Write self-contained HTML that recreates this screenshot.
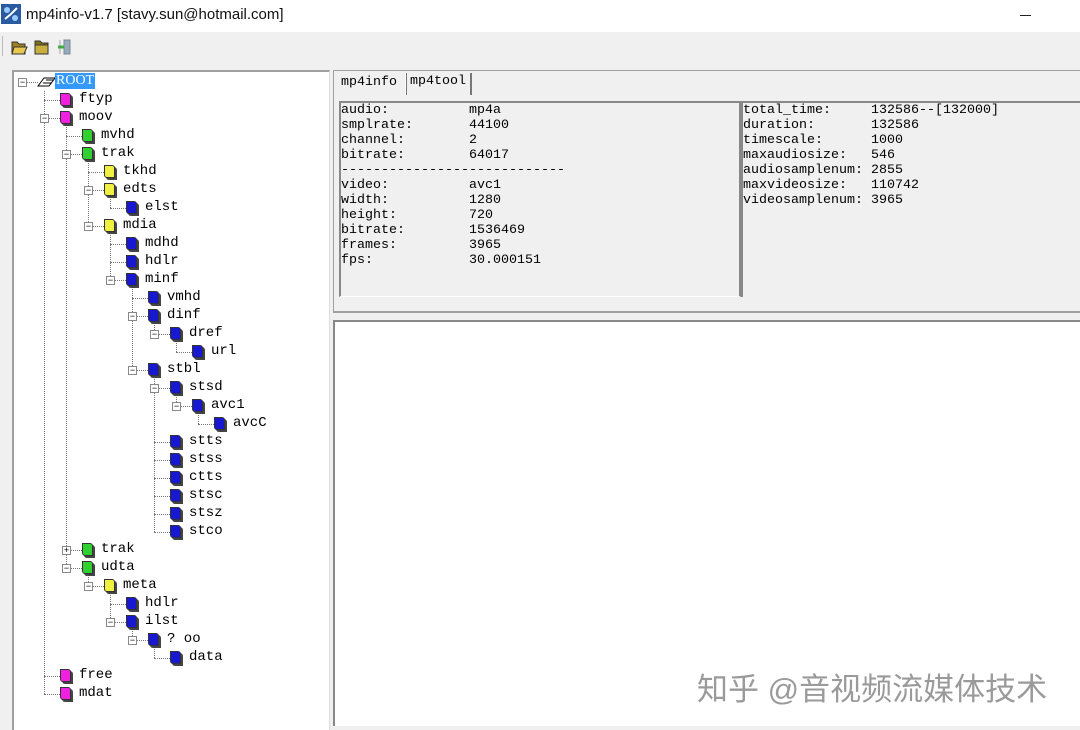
<!DOCTYPE html>
<html><head><meta charset="utf-8"><style>
*{margin:0;padding:0;box-sizing:border-box}
body{width:1080px;height:726px;background:#f0f0f0;position:relative;overflow:hidden;font-family:"Liberation Mono",monospace}
.abs{position:absolute}
#title{left:0;top:0;width:1080px;height:32px;background:#fff}
#title span{position:absolute;left:26px;top:6px;font:15px "Liberation Sans",sans-serif;color:#111}
#tree{left:12px;top:70px;width:318px;height:660px;background:#fff;border-top:2px solid #a0a0a0;border-left:2px solid #a0a0a0;border-right:1px solid #ddd}
.r{position:absolute;height:18px;width:200px}
.r .h{position:absolute;left:0;top:9px;width:16px;border-top:1px dotted #777}
.r .b{position:absolute;left:-4px;top:5px;width:9px;height:9px;border:1px solid #888;background:#fff;font:9px/7px "Liberation Sans";text-align:center;color:#000}
.r .i{position:absolute;left:16px;top:2px;width:11px;height:13px;border:1px solid #333;border-radius:0 3px 0 3px;box-shadow:2px 2px 0 #444}
.r .t{position:absolute;left:35px;top:0px;font-size:14px;color:#000;white-space:pre}
.m{background:#f020e0}.g{background:#30d030}.y{background:#f0f040}.bl{background:#1818d0}
.v{position:absolute;width:0;border-left:1px dotted #777}
.txt{font-size:13.33px;line-height:15px;white-space:pre;color:#000}
</style></head><body>
<div id="title" class="abs"><svg class="abs" style="left:1px;top:4px" width="20" height="20"><rect x="0" y="0" width="20" height="20" fill="#2a5aa0"/><circle cx="6" cy="6" r="3" fill="#9cf"/><circle cx="14" cy="14" r="3" fill="#9cf"/><path d="M4 15 L10 10 L16 4" stroke="#fff" stroke-width="2" fill="none"/></svg><span>mp4info-v1.7 [stavy.sun@hotmail.com]</span>
<div class="abs" style="left:1020px;top:15px;width:11px;border-top:1px solid #222"></div></div>
<div class="abs" style="left:2px;top:36px;width:1px;height:20px;background:#bbb"></div>
<svg class="abs" style="left:11px;top:38px" width="60" height="18"><path d="M1 4h5l2 2h6v10H1z" fill="#a08020" stroke="#333"/><path d="M3 9h13l-3 7H1z" fill="#e8c850" stroke="#333"/><path d="M24 3h5l2 2h6v11H24z" fill="#807018" stroke="#333"/><path d="M24 7h13v9H24z" fill="#c8b040" stroke="#333"/><rect x="48" y="2" width="2" height="14" fill="#ccc"/><rect x="53" y="2" width="6" height="14" fill="#9ab" stroke="#789"/><path d="M47 9h6" stroke="#4a4" stroke-width="3"/></svg>
<div id="tree" class="abs"></div>

<div class="v" style="left:44px;top:91px;height:603px"></div>
<div class="v" style="left:66px;top:127px;height:441px"></div>
<div class="v" style="left:88px;top:163px;height:63px"></div>
<div class="v" style="left:110px;top:199px;height:9px"></div>
<div class="v" style="left:110px;top:235px;height:45px"></div>
<div class="v" style="left:132px;top:289px;height:81px"></div>
<div class="v" style="left:154px;top:325px;height:9px"></div>
<div class="v" style="left:176px;top:343px;height:9px"></div>
<div class="v" style="left:154px;top:379px;height:153px"></div>
<div class="v" style="left:176px;top:397px;height:9px"></div>
<div class="v" style="left:198px;top:415px;height:9px"></div>
<div class="v" style="left:88px;top:577px;height:9px"></div>
<div class="v" style="left:110px;top:595px;height:27px"></div>
<div class="v" style="left:132px;top:631px;height:9px"></div>
<div class="v" style="left:154px;top:649px;height:9px"></div>

<div class="r" style="left:22px;top:73px"><div class="h"></div><div class="b">−</div><svg class="abs" style="left:14px;top:3px" width="20" height="12"><path d="M2 10 L8 2 H19 L13 10Z" fill="#fff" stroke="#000"/><path d="M7 7h8M10 4h7" stroke="#000"/></svg><div class="t" style="left:33px;top:0;background:#3399ff;color:#fff;padding:0 1px;font-family:'Liberation Serif',serif">ROOT</div></div>
<div class="r" style="left:44px;top:91px"><div class="h"></div><div class="i m"></div><div class="t">ftyp</div></div>
<div class="r" style="left:44px;top:109px"><div class="h"></div><div class="b">−</div><div class="i m"></div><div class="t">moov</div></div>
<div class="r" style="left:66px;top:127px"><div class="h"></div><div class="i g"></div><div class="t">mvhd</div></div>
<div class="r" style="left:66px;top:145px"><div class="h"></div><div class="b">−</div><div class="i g"></div><div class="t">trak</div></div>
<div class="r" style="left:88px;top:163px"><div class="h"></div><div class="i y"></div><div class="t">tkhd</div></div>
<div class="r" style="left:88px;top:181px"><div class="h"></div><div class="b">−</div><div class="i y"></div><div class="t">edts</div></div>
<div class="r" style="left:110px;top:199px"><div class="h"></div><div class="i bl"></div><div class="t">elst</div></div>
<div class="r" style="left:88px;top:217px"><div class="h"></div><div class="b">−</div><div class="i y"></div><div class="t">mdia</div></div>
<div class="r" style="left:110px;top:235px"><div class="h"></div><div class="i bl"></div><div class="t">mdhd</div></div>
<div class="r" style="left:110px;top:253px"><div class="h"></div><div class="i bl"></div><div class="t">hdlr</div></div>
<div class="r" style="left:110px;top:271px"><div class="h"></div><div class="b">−</div><div class="i bl"></div><div class="t">minf</div></div>
<div class="r" style="left:132px;top:289px"><div class="h"></div><div class="i bl"></div><div class="t">vmhd</div></div>
<div class="r" style="left:132px;top:307px"><div class="h"></div><div class="b">−</div><div class="i bl"></div><div class="t">dinf</div></div>
<div class="r" style="left:154px;top:325px"><div class="h"></div><div class="b">−</div><div class="i bl"></div><div class="t">dref</div></div>
<div class="r" style="left:176px;top:343px"><div class="h"></div><div class="i bl"></div><div class="t">url</div></div>
<div class="r" style="left:132px;top:361px"><div class="h"></div><div class="b">−</div><div class="i bl"></div><div class="t">stbl</div></div>
<div class="r" style="left:154px;top:379px"><div class="h"></div><div class="b">−</div><div class="i bl"></div><div class="t">stsd</div></div>
<div class="r" style="left:176px;top:397px"><div class="h"></div><div class="b">−</div><div class="i bl"></div><div class="t">avc1</div></div>
<div class="r" style="left:198px;top:415px"><div class="h"></div><div class="i bl"></div><div class="t">avcC</div></div>
<div class="r" style="left:154px;top:433px"><div class="h"></div><div class="i bl"></div><div class="t">stts</div></div>
<div class="r" style="left:154px;top:451px"><div class="h"></div><div class="i bl"></div><div class="t">stss</div></div>
<div class="r" style="left:154px;top:469px"><div class="h"></div><div class="i bl"></div><div class="t">ctts</div></div>
<div class="r" style="left:154px;top:487px"><div class="h"></div><div class="i bl"></div><div class="t">stsc</div></div>
<div class="r" style="left:154px;top:505px"><div class="h"></div><div class="i bl"></div><div class="t">stsz</div></div>
<div class="r" style="left:154px;top:523px"><div class="h"></div><div class="i bl"></div><div class="t">stco</div></div>
<div class="r" style="left:66px;top:541px"><div class="h"></div><div class="b">+</div><div class="i g"></div><div class="t">trak</div></div>
<div class="r" style="left:66px;top:559px"><div class="h"></div><div class="b">−</div><div class="i g"></div><div class="t">udta</div></div>
<div class="r" style="left:88px;top:577px"><div class="h"></div><div class="b">−</div><div class="i y"></div><div class="t">meta</div></div>
<div class="r" style="left:110px;top:595px"><div class="h"></div><div class="i bl"></div><div class="t">hdlr</div></div>
<div class="r" style="left:110px;top:613px"><div class="h"></div><div class="b">−</div><div class="i bl"></div><div class="t">ilst</div></div>
<div class="r" style="left:132px;top:631px"><div class="h"></div><div class="b">−</div><div class="i bl"></div><div class="t">? oo</div></div>
<div class="r" style="left:154px;top:649px"><div class="h"></div><div class="i bl"></div><div class="t">data</div></div>
<div class="r" style="left:44px;top:667px"><div class="h"></div><div class="i m"></div><div class="t">free</div></div>
<div class="r" style="left:44px;top:685px"><div class="h"></div><div class="i m"></div><div class="t">mdat</div></div>

<div class="abs" style="left:333px;top:70px;width:747px;height:243px;border-top:1px solid #a0a0a0;border-left:1px solid #a0a0a0;border-bottom:2px solid #a0a0a0"></div>
<div class="abs txt" style="left:341px;top:75px">mp4info</div>
<div class="abs" style="left:405px;top:73px;height:22px;border-left:1px solid #fff;border-right:1px solid #777;width:2px"></div>
<div class="abs txt" style="left:410px;top:74px">mp4tool</div>
<div class="abs" style="left:470px;top:73px;height:22px;border-right:2px solid #777;width:2px"></div>
<div class="abs" style="left:339px;top:101px;width:402px;height:196px;border-top:2px solid #888;border-left:2px solid #888;border-right:2px solid #888;border-bottom:1px solid #fff"></div>
<div class="abs" style="left:741px;top:101px;width:339px;height:196px;border-top:2px solid #888;border-left:2px solid #888"></div>
<div class="abs txt" style="left:341px;top:103px">audio:          mp4a
smplrate:       44100
channel:        2
bitrate:        64017
----------------------------
video:          avc1
width:          1280
height:         720
bitrate:        1536469
frames:         3965
fps:            30.000151</div>
<div class="abs txt" style="left:743px;top:103px">total_time:     132586--[132000]
duration:       132586
timescale:      1000
maxaudiosize:   546
audiosamplenum: 2855
maxvideosize:   110742
videosamplenum: 3965</div>

<div class="abs" style="left:333px;top:320px;width:747px;height:406px;background:#fff;border-top:2px solid #888;border-left:2px solid #888"></div>
<div class="abs" style="left:697px;top:664px;font:31px 'Liberation Sans','Noto Sans CJK SC',sans-serif;color:#9a9a9a;white-space:nowrap">知乎 @音视频流媒体技术</div>
</body></html>
